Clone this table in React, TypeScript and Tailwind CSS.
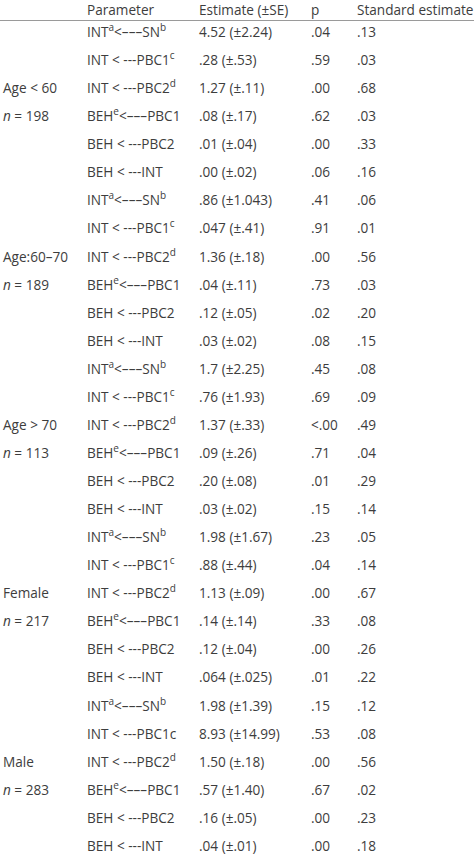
import type { ReactNode } from "react";

type Row = {
  label?: ReactNode;
  param: ReactNode;
  est: string;
  p: string;
  std: string;
};

const Sup = ({ children }: { children: ReactNode }) => (
  <sup className="text-[10px] -top-[6px]">{children}</sup>
);

const sn = (
  <>
    INT<Sup>a</Sup>&lt;–––SN<Sup>b</Sup>
  </>
);
const pbc1 = (
  <>
    INT &lt; ---PBC1<Sup>c</Sup>
  </>
);
const pbc2 = (
  <>
    INT &lt; ---PBC2<Sup>d</Sup>
  </>
);
const behPbc1 = (
  <>
    BEH<Sup>e</Sup>&lt;–––PBC1
  </>
);
const behPbc2 = <>BEH &lt; ---PBC2</>;
const behInt = <>BEH &lt; ---INT</>;

const n = (v: string) => (
  <>
    <i>n</i> = {v}
  </>
);

const rows: Row[] = [
  { param: sn, est: "4.52 (±2.24)", p: ".04", std: ".13" },
  { param: pbc1, est: ".28 (±.53)", p: ".59", std: ".03" },
  { label: "Age < 60", param: pbc2, est: "1.27 (±.11)", p: ".00", std: ".68" },
  { label: n("198"), param: behPbc1, est: ".08 (±.17)", p: ".62", std: ".03" },
  { param: behPbc2, est: ".01 (±.04)", p: ".00", std: ".33" },
  { param: behInt, est: ".00 (±.02)", p: ".06", std: ".16" },
  { param: sn, est: ".86 (±1.043)", p: ".41", std: ".06" },
  { param: pbc1, est: ".047 (±.41)", p: ".91", std: ".01" },
  { label: "Age:60–70", param: pbc2, est: "1.36 (±.18)", p: ".00", std: ".56" },
  { label: n("189"), param: behPbc1, est: ".04 (±.11)", p: ".73", std: ".03" },
  { param: behPbc2, est: ".12 (±.05)", p: ".02", std: ".20" },
  { param: behInt, est: ".03 (±.02)", p: ".08", std: ".15" },
  { param: sn, est: "1.7 (±2.25)", p: ".45", std: ".08" },
  { param: pbc1, est: ".76 (±1.93)", p: ".69", std: ".09" },
  { label: "Age > 70", param: pbc2, est: "1.37 (±.33)", p: "<.00", std: ".49" },
  { label: n("113"), param: behPbc1, est: ".09 (±.26)", p: ".71", std: ".04" },
  { param: behPbc2, est: ".20 (±.08)", p: ".01", std: ".29" },
  { param: behInt, est: ".03 (±.02)", p: ".15", std: ".14" },
  { param: sn, est: "1.98 (±1.67)", p: ".23", std: ".05" },
  { param: pbc1, est: ".88 (±.44)", p: ".04", std: ".14" },
  { label: "Female", param: pbc2, est: "1.13 (±.09)", p: ".00", std: ".67" },
  { label: n("217"), param: behPbc1, est: ".14 (±.14)", p: ".33", std: ".08" },
  { param: behPbc2, est: ".12 (±.04)", p: ".00", std: ".26" },
  { param: behInt, est: ".064 (±.025)", p: ".01", std: ".22" },
  { param: sn, est: "1.98 (±1.39)", p: ".15", std: ".12" },
  { param: <>INT &lt; ---PBC1c</>, est: "8.93 (±14.99)", p: ".53", std: ".08" },
  { label: "Male", param: pbc2, est: "1.50 (±.18)", p: ".00", std: ".56" },
  { label: n("283"), param: behPbc1, est: ".57 (±1.40)", p: ".67", std: ".02" },
  { param: behPbc2, est: ".16 (±.05)", p: ".00", std: ".23" },
  { param: behInt, est: ".04 (±.01)", p: ".00", std: ".18" },
];

const cols = "grid grid-cols-[84px_112px_112px_46px_1fr] pl-[3px]";

export default function App() {
  return (
    <div
      className="w-[474px] h-[863px] overflow-hidden bg-white text-[13.6px] text-[#3d3d3d] whitespace-nowrap"
      style={{ fontFamily: '"Open Sans", sans-serif' }}
    >
      <div className={`${cols} h-[21px] items-center border-b border-[#9a9a9a] leading-none`}>
        <div />
        <div>Parameter</div>
        <div>Estimate (±SE)</div>
        <div>p</div>
        <div>Standard estimate</div>
      </div>
      <div>
        {rows.map((r, i) => (
          <div key={i} className={`${cols} h-[28.07px] items-start leading-[22px]`}>
            <div>{r.label}</div>
            <div>{r.param}</div>
            <div>{r.est}</div>
            <div>{r.p}</div>
            <div>{r.std}</div>
          </div>
        ))}
      </div>
    </div>
  );
}
